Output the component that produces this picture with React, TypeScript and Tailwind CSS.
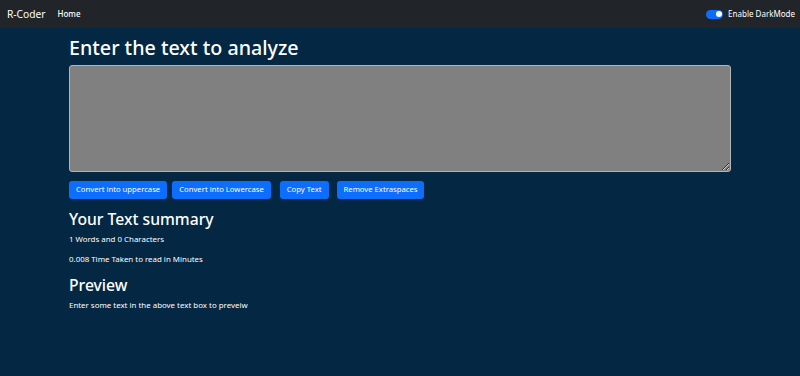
import { useState } from "react";

export default function App() {
  const [text, setText] = useState("");

  const words = text.split(" ").length;
  const chars = text.length;

  return (
    <div
      className="min-h-[376px] bg-[#042743] text-white"
      style={{ fontFamily: '"Noto Sans", "Open Sans", sans-serif' }}
    >
      {/* NAVBAR */}
      <nav className="h-[28px] bg-[#212529] flex items-center justify-between pl-[7px] pr-[5px]">
        <div className="flex items-center">
          <span className="text-[10.2px] leading-none mr-[12px]">R-Coder</span>
          <a href="#" className="text-[8px] leading-none font-medium text-white">
            Home
          </a>
        </div>
        <label className="flex items-center gap-[5px]">
          <span className="relative inline-block w-[17px] h-[9px] rounded-full bg-[#0d6efd]">
            <span className="absolute right-[1.5px] top-[1.5px] w-[6px] h-[6px] rounded-full bg-white" />
          </span>
          <span className="text-[8px] leading-none">Enable DarkMode</span>
        </label>
      </nav>

      {/* FORM */}
      <div className="w-[662px] mx-auto pt-[8px]">
        <h1 className="text-[19.7px] leading-[1.2] font-medium mb-[5px]">
          Enter the text to analyze
        </h1>
        <textarea
          value={text}
          onChange={(e) => setText(e.target.value)}
          className="block w-full h-[107px] bg-[#808080] border border-[#b0b5ba] rounded-[3px] mb-[9px] outline-none"
        />
        <div className="flex items-center">
          <button className="h-[18px] px-[7px] mr-[5px] bg-[#0d6efd] rounded-[3px] text-[7.7px]">
            Convert into uppercase
          </button>
          <button className="h-[18px] px-[7px] mr-[9px] bg-[#0d6efd] rounded-[3px] text-[7.7px]">
            Convert into Lowercase
          </button>
          <button className="h-[18px] px-[7px] mr-[8px] bg-[#0d6efd] rounded-[3px] text-[7.7px]">
            Copy Text
          </button>
          <button className="h-[18px] px-[7px] bg-[#0d6efd] rounded-[3px] text-[7.7px]">
            Remove Extraspaces
          </button>
        </div>
      </div>

      {/* SUMMARY */}
      <div className="w-[662px] mx-auto pt-[11px]">
        <h2 className="text-[15.7px] leading-[1.2] font-medium mb-[6px]">
          Your Text summary
        </h2>
        <p className="text-[7.9px] leading-[1.5] mb-[8px]">
          {words} Words and {chars} Characters
        </p>
        <p className="text-[7.9px] leading-[1.5] mb-[10px]">
          {(0.008 * words).toFixed(3)} Time Taken to read in Minutes
        </p>
        <h2 className="text-[15.7px] leading-[1.2] font-medium mb-[5px]">Preview</h2>
        <p className="text-[7.9px] leading-[1.5]">
          {text.length > 0 ? text : "Enter some text in the above text box to preveiw"}
        </p>
      </div>
    </div>
  );
}
